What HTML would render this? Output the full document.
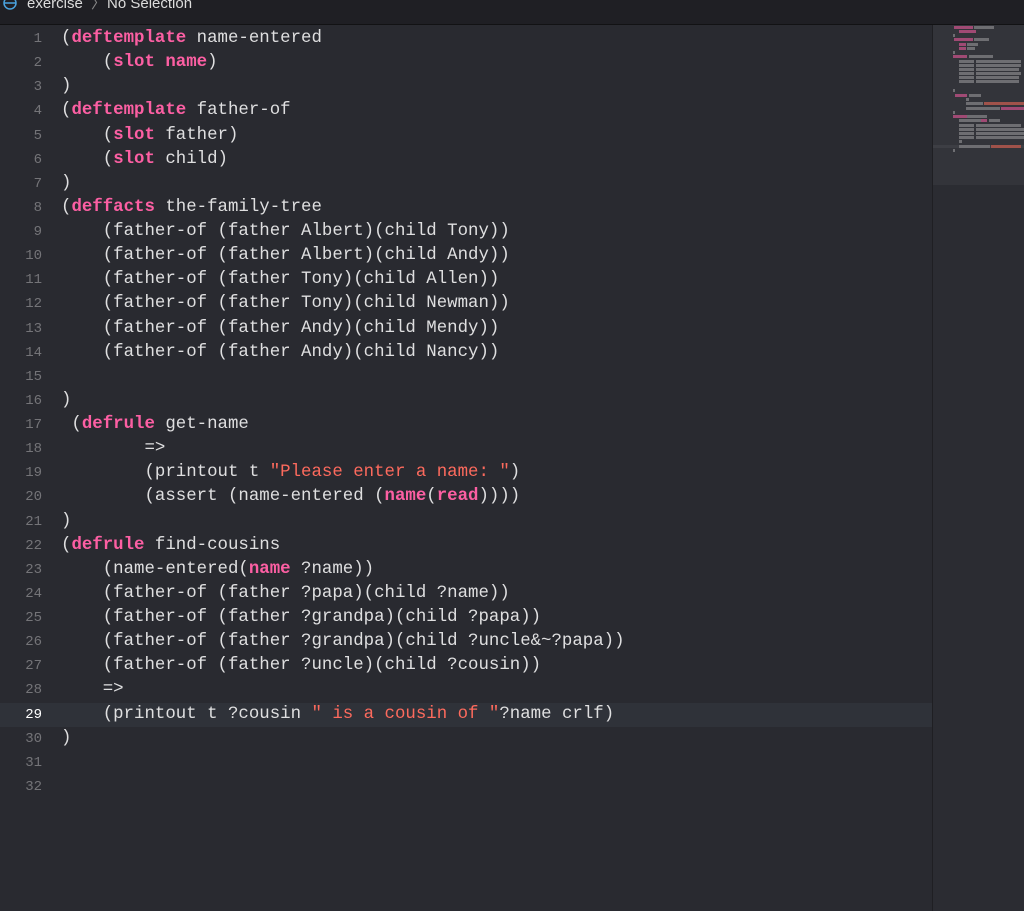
<!DOCTYPE html>
<html><head><meta charset="utf-8"><style>
html,body{margin:0;padding:0;background:#292a30;width:1024px;height:911px;overflow:hidden;font-family:"Liberation Mono",monospace}
#hdr{position:absolute;left:0;top:0;width:1024px;height:24px;background:#1f1f24;border-bottom:1px solid #121214;color:#dcdcdc;font-family:"Liberation Sans",sans-serif;font-size:15px;line-height:12px}
#hdr span{position:absolute;top:-2px}
#code{position:absolute;left:0;top:27px;width:932px}
.l{height:24.13px;line-height:24.13px;font-size:17.4px;white-space:pre;color:#dfdfe0;position:relative}
.n{position:absolute;left:0;width:42px;text-align:right;color:#747478;font-size:14px}
.t{position:absolute;left:61px}
.k{color:#fc5fa3;font-weight:bold}
.s{color:#fc6a5d}
.cur{background:#2f3239}
.cur .n{color:#fff}
#mm{position:absolute;left:932px;top:25px;width:92px;height:886px;background:#2b2c32;border-left:1px solid #1f1f23}
#vp{position:absolute;left:933px;top:25px;width:91px;height:160px;background:#33343a}
.b{position:absolute;height:3px}
.p{background:#a04a74}.g{background:#6e6e72}.r{background:#a0524a}
</style></head><body>
<div id="hdr"><svg style="position:absolute;left:3px;top:-4px" width="14" height="14"><circle cx="7" cy="7" r="6" fill="none" stroke="#4aa3df" stroke-width="1.5"/><line x1="1" y1="7" x2="13" y2="7" stroke="#4aa3df" stroke-width="1.5"/></svg><span style="left:27px">exercise</span><span style="left:91px;color:#888">〉</span><span style="left:107px">No Selection</span></div>
<div id="code">
<div class="l"><span class="n">1</span><span class="t">(<span class="k">deftemplate</span> name-entered</span></div>
<div class="l"><span class="n">2</span><span class="t">    (<span class="k">slot</span> <span class="k">name</span>)</span></div>
<div class="l"><span class="n">3</span><span class="t">)</span></div>
<div class="l"><span class="n">4</span><span class="t">(<span class="k">deftemplate</span> father-of</span></div>
<div class="l"><span class="n">5</span><span class="t">    (<span class="k">slot</span> father)</span></div>
<div class="l"><span class="n">6</span><span class="t">    (<span class="k">slot</span> child)</span></div>
<div class="l"><span class="n">7</span><span class="t">)</span></div>
<div class="l"><span class="n">8</span><span class="t">(<span class="k">deffacts</span> the-family-tree</span></div>
<div class="l"><span class="n">9</span><span class="t">    (father-of (father Albert)(child Tony))</span></div>
<div class="l"><span class="n">10</span><span class="t">    (father-of (father Albert)(child Andy))</span></div>
<div class="l"><span class="n">11</span><span class="t">    (father-of (father Tony)(child Allen))</span></div>
<div class="l"><span class="n">12</span><span class="t">    (father-of (father Tony)(child Newman))</span></div>
<div class="l"><span class="n">13</span><span class="t">    (father-of (father Andy)(child Mendy))</span></div>
<div class="l"><span class="n">14</span><span class="t">    (father-of (father Andy)(child Nancy))</span></div>
<div class="l"><span class="n">15</span><span class="t"></span></div>
<div class="l"><span class="n">16</span><span class="t">)</span></div>
<div class="l"><span class="n">17</span><span class="t"> (<span class="k">defrule</span> get-name</span></div>
<div class="l"><span class="n">18</span><span class="t">        =&gt;</span></div>
<div class="l"><span class="n">19</span><span class="t">        (printout t <span class="s">"Please enter a name: "</span>)</span></div>
<div class="l"><span class="n">20</span><span class="t">        (assert (name-entered (<span class="k">name</span>(<span class="k">read</span>))))</span></div>
<div class="l"><span class="n">21</span><span class="t">)</span></div>
<div class="l"><span class="n">22</span><span class="t">(<span class="k">defrule</span> find-cousins</span></div>
<div class="l"><span class="n">23</span><span class="t">    (name-entered(<span class="k">name</span> ?name))</span></div>
<div class="l"><span class="n">24</span><span class="t">    (father-of (father ?papa)(child ?name))</span></div>
<div class="l"><span class="n">25</span><span class="t">    (father-of (father ?grandpa)(child ?papa))</span></div>
<div class="l"><span class="n">26</span><span class="t">    (father-of (father ?grandpa)(child ?uncle&amp;~?papa))</span></div>
<div class="l"><span class="n">27</span><span class="t">    (father-of (father ?uncle)(child ?cousin))</span></div>
<div class="l"><span class="n">28</span><span class="t">    =&gt;</span></div>
<div class="l cur"><span class="n">29</span><span class="t">    (printout t ?cousin <span class="s">" is a cousin of "</span>?name crlf)</span></div>
<div class="l"><span class="n">30</span><span class="t">)</span></div>
<div class="l"><span class="n">31</span><span class="t"></span></div>
<div class="l"><span class="n">32</span><span class="t"></span></div>
</div>
<div id="mm"></div><div id="vp"></div>
<div class="b" style="left:933px;top:144.5px;width:91px;background:#3d3e44"></div>
<div class="b p" style="left:954px;top:25.5px;width:19px"></div><div class="b g" style="left:974px;top:25.5px;width:20px"></div>
<div class="b p" style="left:959px;top:29.5px;width:17px"></div>
<div class="b g" style="left:953px;top:34px;width:2px"></div>
<div class="b p" style="left:954px;top:38px;width:19px"></div><div class="b g" style="left:974px;top:38px;width:15px"></div>
<div class="b p" style="left:959px;top:42.5px;width:7px"></div><div class="b g" style="left:967px;top:42.5px;width:11px"></div>
<div class="b p" style="left:959px;top:46.5px;width:7px"></div><div class="b g" style="left:967px;top:46.5px;width:8px"></div>
<div class="b g" style="left:953px;top:50.5px;width:2px"></div>
<div class="b p" style="left:953px;top:55px;width:14px"></div><div class="b g" style="left:969px;top:55px;width:24px"></div>
<div class="b g" style="left:959px;top:59.5px;width:15px"></div><div class="b g" style="left:976px;top:59.5px;width:45px"></div>
<div class="b g" style="left:959px;top:63.5px;width:15px"></div><div class="b g" style="left:976px;top:63.5px;width:45px"></div>
<div class="b g" style="left:959px;top:67.5px;width:15px"></div><div class="b g" style="left:976px;top:67.5px;width:43px"></div>
<div class="b g" style="left:959px;top:72px;width:15px"></div><div class="b g" style="left:976px;top:72px;width:45px"></div>
<div class="b g" style="left:959px;top:76px;width:15px"></div><div class="b g" style="left:976px;top:76px;width:43px"></div>
<div class="b g" style="left:959px;top:80px;width:15px"></div><div class="b g" style="left:976px;top:80px;width:43px"></div>
<div class="b g" style="left:953px;top:89px;width:2px"></div>
<div class="b p" style="left:955px;top:93.5px;width:12px"></div><div class="b g" style="left:969px;top:93.5px;width:12px"></div>
<div class="b g" style="left:966px;top:97.5px;width:3px"></div>
<div class="b g" style="left:966px;top:102px;width:17px"></div><div class="b r" style="left:984px;top:102px;width:40px"></div>
<div class="b g" style="left:966px;top:106.5px;width:13px"></div><div class="b g" style="left:979px;top:106.5px;width:21px"></div><div class="b p" style="left:1001px;top:106.5px;width:23px"></div>
<div class="b g" style="left:953px;top:110.5px;width:2px"></div>
<div class="b p" style="left:953px;top:115px;width:14px"></div><div class="b g" style="left:967px;top:115px;width:20px"></div>
<div class="b g" style="left:959px;top:119px;width:22px"></div><div class="b p" style="left:981px;top:119px;width:6px"></div><div class="b g" style="left:989px;top:119px;width:11px"></div>
<div class="b g" style="left:959px;top:123.5px;width:15px"></div><div class="b g" style="left:976px;top:123.5px;width:45px"></div>
<div class="b g" style="left:959px;top:127.5px;width:15px"></div><div class="b g" style="left:976px;top:127.5px;width:48px"></div>
<div class="b g" style="left:959px;top:131.5px;width:15px"></div><div class="b g" style="left:976px;top:131.5px;width:48px"></div>
<div class="b g" style="left:959px;top:136px;width:15px"></div><div class="b g" style="left:976px;top:136px;width:48px"></div>
<div class="b g" style="left:959px;top:140px;width:3px"></div>
<div class="b g" style="left:959px;top:144.5px;width:31px"></div><div class="b r" style="left:991px;top:144.5px;width:30px"></div>
<div class="b g" style="left:953px;top:148.5px;width:2px"></div>
</body></html>
